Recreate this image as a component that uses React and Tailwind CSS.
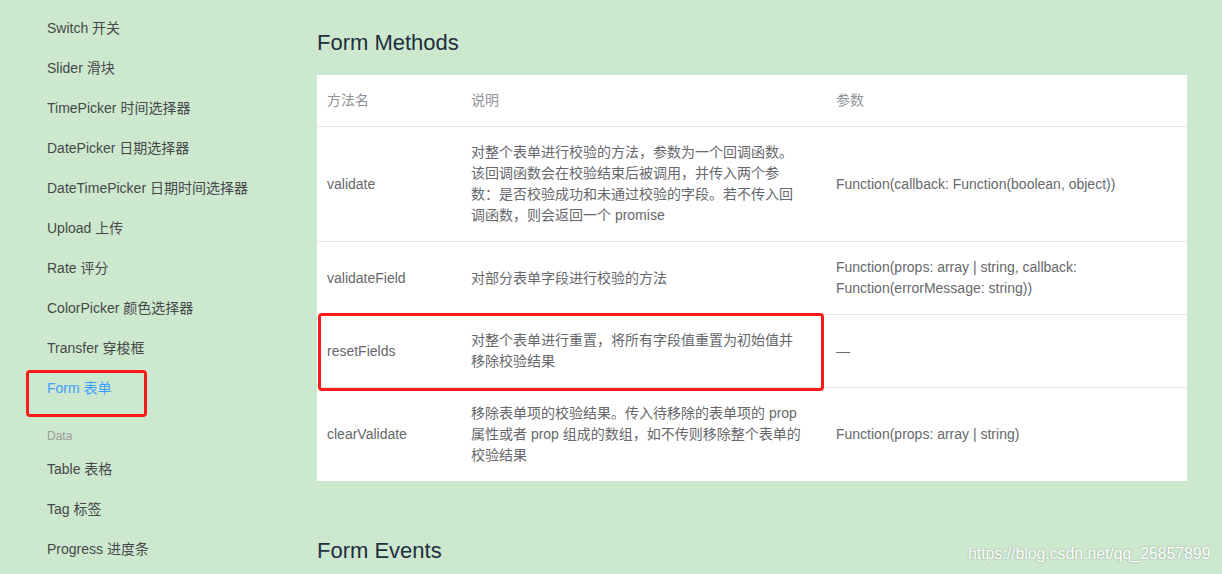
import React from "react";

const font = { fontFamily: '"Liberation Sans", Arial, "Noto Sans CJK SC", sans-serif' };

const navTop = [
  "Switch 开关",
  "Slider 滑块",
  "TimePicker 时间选择器",
  "DatePicker 日期选择器",
  "DateTimePicker 日期时间选择器",
  "Upload 上传",
  "Rate 评分",
  "ColorPicker 颜色选择器",
  "Transfer 穿梭框",
];
const navData = ["Table 表格", "Tag 标签", "Progress 进度条"];

const rows = [
  {
    name: "validate",
    desc: "对整个表单进行校验的方法，参数为一个回调函数。该回调函数会在校验结束后被调用，并传入两个参数：是否校验成功和未通过校验的字段。若不传入回调函数，则会返回一个 promise",
    params: "Function(callback: Function(boolean, object))",
  },
  {
    name: "validateField",
    desc: "对部分表单字段进行校验的方法",
    params: "Function(props: array | string, callback: Function(errorMessage: string))",
  },
  {
    name: "resetFields",
    desc: "对整个表单进行重置，将所有字段值重置为初始值并移除校验结果",
    params: "—",
  },
  {
    name: "clearValidate",
    desc: "移除表单项的校验结果。传入待移除的表单项的 prop 属性或者 prop 组成的数组，如不传则移除整个表单的校验结果",
    params: "Function(props: array | string)",
  },
];

export default function App() {
  return (
    <div
      className="relative w-[1222px] h-[574px] overflow-hidden bg-[#cce8cf] flex"
      style={font}
    >
      {/* Sidebar */}
      <div className="w-[317px] shrink-0 pt-[8px]">
        {navTop.map((t) => (
          <div key={t} className="h-10 flex items-center pl-[47px] text-[14px] text-[#48484a]">
            {t}
          </div>
        ))}
        <div className="h-10 flex items-center pl-[47px] text-[14px] text-[#409eff]">
          Form 表单
        </div>
        <div className="pt-[19px] pb-[4px] leading-[18px] pl-[47px] text-[12px] text-[#999]">
          Data
        </div>
        {navData.map((t) => (
          <div key={t} className="h-10 flex items-center pl-[47px] text-[14px] text-[#48484a]">
            {t}
          </div>
        ))}
      </div>

      {/* Main */}
      <div className="w-[870px] shrink-0">
        <h3 className="h-[75px] pt-[28px] text-[22px] leading-[30px] text-[#1f2f3d] font-normal">
          Form Methods
        </h3>
        <div className="bg-white text-[14px] leading-[21px]">
          <div className="grid grid-cols-[144px_365px_361px] border-b border-[#dfe6ec] text-[#909399]">
            <div className="py-[15px] pl-[10px]">方法名</div>
            <div className="py-[15px] pl-[10px]">说明</div>
            <div className="py-[15px] pl-[10px]">参数</div>
          </div>
          {rows.map((r, i) => (
            <div
              key={r.name}
              className={
                "grid grid-cols-[144px_365px_361px] items-center text-[#66686c] " +
                (i < rows.length - 1 ? "border-b border-[#e4e7ed]" : "")
              }
            >
              <div className="py-[15px] pl-[10px] pr-[10px]">{r.name}</div>
              <div className="py-[15px] pl-[10px] pr-[20px]">{r.desc}</div>
              <div className="py-[15px] pl-[10px] pr-[10px]">{r.params}</div>
            </div>
          ))}
        </div>
        <h3 className="pt-[55px] text-[22px] leading-[30px] text-[#1f2f3d] font-normal">
          Form Events
        </h3>
      </div>

      {/* Red annotation boxes */}
      <div className="absolute left-[26px] top-[370px] w-[121px] h-[47px] border-[3px] border-[#ff1a1a] rounded-[4px]" />
      <div className="absolute left-[318px] top-[313px] w-[506px] h-[78px] border-[3px] border-[#ff1a1a] rounded-[4px]" />

      {/* Watermark */}
      <div
        className="absolute left-[968px] top-[543px] text-[15.8px] leading-[22px] text-white"
        style={{ textShadow: "0 0 2px rgba(0,0,0,0.35)" }}
      >
        https://blog.csdn.net/qq_25857899
      </div>
    </div>
  );
}
